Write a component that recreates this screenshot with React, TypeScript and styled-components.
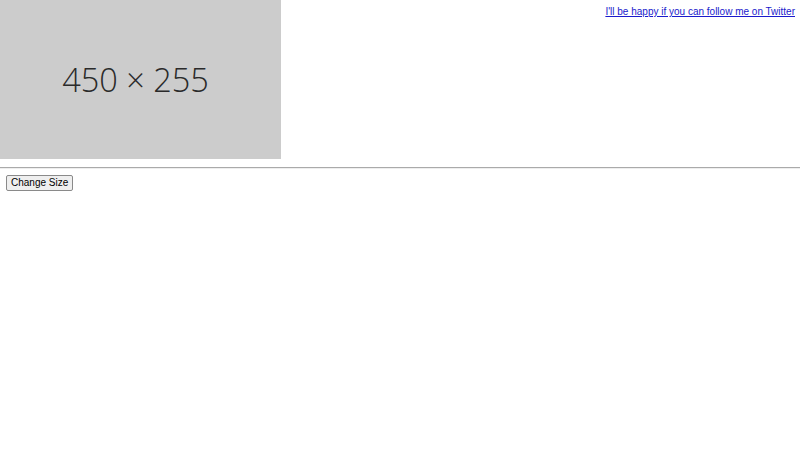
import React, { useState } from 'react';
import styled, { createGlobalStyle } from 'styled-components';

const GlobalStyle = createGlobalStyle`
  body {
    margin: 0;
    background: #fff;
    font-family: "Liberation Sans", Arial, sans-serif;
  }
`;

const TopRow = styled.div`
  display: flex;
  justify-content: space-between;
  align-items: flex-start;
`;

const Placeholder = styled.div<{ $w: number; $h: number }>`
  width: ${(p) => p.$w}px;
  height: ${(p) => p.$h}px;
  background: #cccccc;
  display: flex;
  align-items: center;
  justify-content: center;
  color: #2a2a2a;
  font-family: "Open Sans", sans-serif;
  font-weight: 300;
  font-size: 32.5px;
  padding-right: 10px;
  box-sizing: border-box;
`;

const TwitterLink = styled.a`
  margin: 6px 5px 0 0;
  font-size: 10px;
  line-height: 12px;
  color: #1a1acc;
  text-decoration: underline;
`;

const Divider = styled.hr`
  margin: 8px 0 6px;
  border: none;
  border-top: 1px solid #aaaaaa;
  border-bottom: 1px solid #eeeeee;
`;

const SizeButton = styled.button`
  display: block;
  margin-left: 6px;
  padding: 1px 4px;
  height: 16px;
  line-height: 12px;
  border: 1px solid #8a8a8a;
  border-radius: 2px;
  background: #efefef;
  color: #000;
  font-family: "Liberation Sans", Arial, sans-serif;
  font-size: 10px;
`;

const sizes = [
  [450, 255],
  [300, 200],
  [600, 300],
];

export default function App() {
  const [idx, setIdx] = useState(0);
  const [w, h] = sizes[idx];
  const scale = 0.625;

  return (
    <>
      <GlobalStyle />
      <TopRow>
        <Placeholder $w={Math.round(w * scale)} $h={Math.round(h * scale)}>
          {w} × {h}
        </Placeholder>
        <TwitterLink href="#">I'll be happy if you can follow me on Twitter</TwitterLink>
      </TopRow>
      <Divider />
      <SizeButton onClick={() => setIdx((idx + 1) % sizes.length)}>Change Size</SizeButton>
    </>
  );
}
